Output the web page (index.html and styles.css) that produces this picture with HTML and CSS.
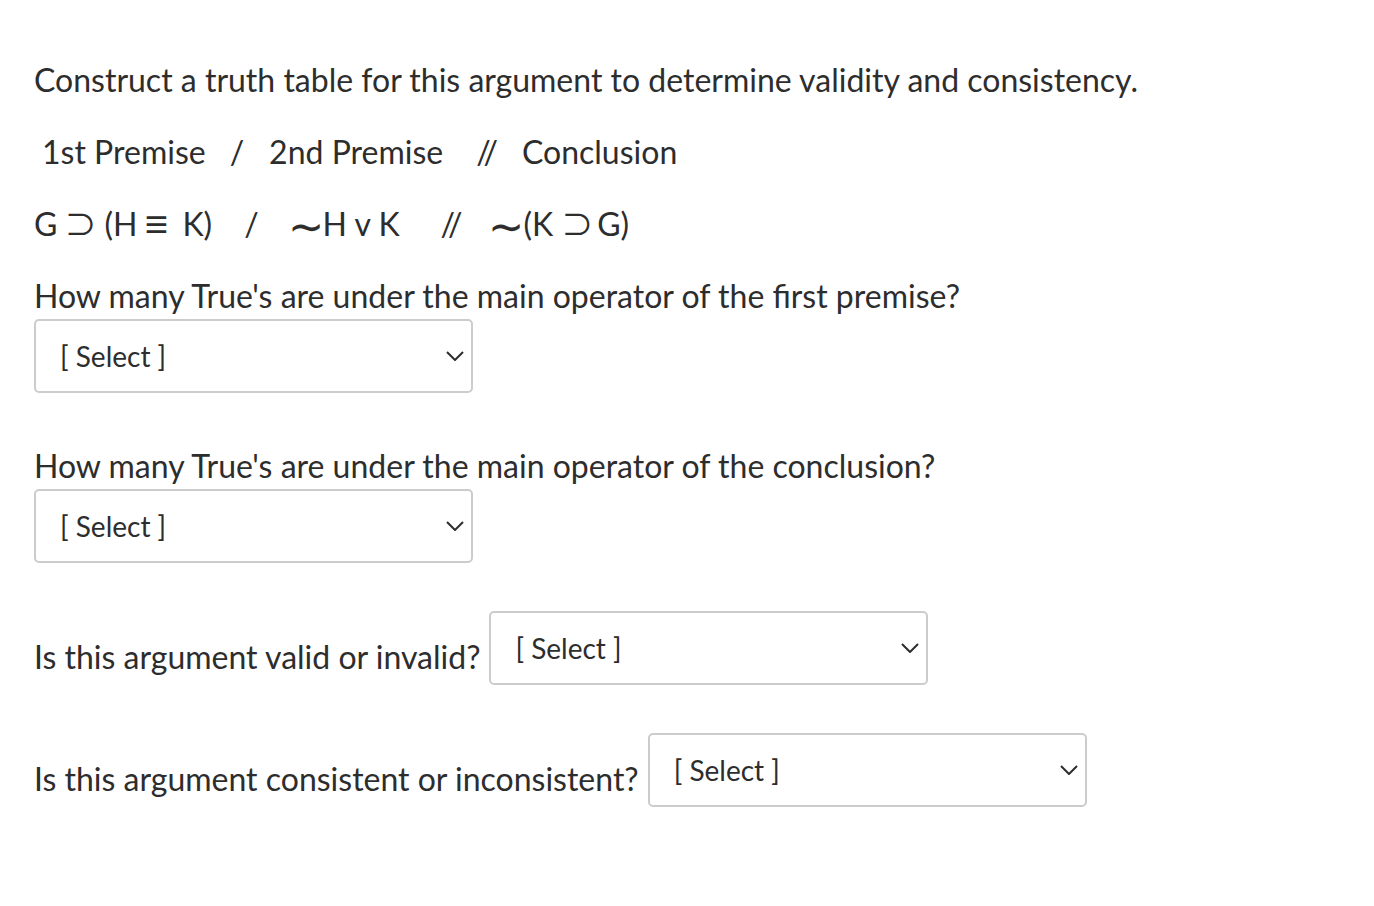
FILE: index.html
```html
<!DOCTYPE html>
<html lang="en">
<head>
<meta charset="utf-8">
<title>Truth table question</title>
<link rel="stylesheet" href="styles.css">
</head>
<body>
<main class="question">
  <p class="line">Construct a truth table for this argument to determine validity and consistency.</p>
  <p class="line premises">
    <span class="p1">1st Premise</span>
    <span class="sep1">/</span>
    <span class="p2">2nd Premise</span>
    <span class="sep2">//</span>
    <span class="p3">Conclusion</span>
  </p>
  <p class="line formula">
    <span class="t t1">G</span>
    <span class="sym s1">⊃</span>
    <span class="t t2">(H</span>
    <span class="sym eq s2">≡</span>
    <span class="t t3">K)</span>
    <span class="t t4">/</span>
    <span class="t t5"><span class="tilde tl1">∼</span>H v K</span>
    <span class="t t6">//</span>
    <span class="t t7"><span class="tilde tl2">∼</span>(K</span>
    <span class="sym s5">⊃</span>
    <span class="t t8">G)</span>
  </p>

  <div class="block">
    <p class="line tight">How many True's are under the main operator of the first premise?</p>
    <div class="select"><span>[ Select ]</span><svg class="chev" width="18" height="10" viewBox="0 0 18 10"><path d="M1 1 L9 9 L17 1" fill="none" stroke="#2d2d2d" stroke-width="2"/></svg></div>
  </div>

  <div class="block">
    <p class="line tight">How many True's are under the main operator of the conclusion?</p>
    <div class="select"><span>[ Select ]</span><svg class="chev" width="18" height="10" viewBox="0 0 18 10"><path d="M1 1 L9 9 L17 1" fill="none" stroke="#2d2d2d" stroke-width="2"/></svg></div>
  </div>

  <div class="row">
    <span class="label">Is this argument valid or invalid?</span>
    <div class="select"><span>[ Select ]</span><svg class="chev" width="18" height="10" viewBox="0 0 18 10"><path d="M1 1 L9 9 L17 1" fill="none" stroke="#2d2d2d" stroke-width="2"/></svg></div>
  </div>

  <div class="row">
    <span class="label">Is this argument consistent or inconsistent?</span>
    <div class="select"><span>[ Select ]</span><svg class="chev" width="18" height="10" viewBox="0 0 18 10"><path d="M1 1 L9 9 L17 1" fill="none" stroke="#2d2d2d" stroke-width="2"/></svg></div>
  </div>
</main>
</body>
</html>
```

FILE: styles.css
```css
html, body {
  margin: 0;
  padding: 0;
  background: #ffffff;
}
body {
  font-family: Lato, "DejaVu Sans", sans-serif;
  color: #2d2d2d;
  font-size: 32px;
}
.question {
  padding: 57px 0 0 34px;
}
.line {
  margin: 0 0 27px 0;
  line-height: 45px;
  height: 45px;
  white-space: nowrap;
}
.premises, .formula {
  display: flex;
  align-items: baseline;
}
.p1 { margin-left: 8px; }
.sep1 { margin-left: 24px; }
.p2 { margin-left: 25px; }
.sep2 { margin-left: 33px; }
.p3 { margin-left: 24px; }

/* formula tokens */
.sym,
.tilde {
  font-family: "Noto Sans CJK JP", "DejaVu Sans", sans-serif;
  font-size: 32px;
  line-height: 1;
  width: 30px;
  display: inline-flex;
  justify-content: center;
}
.sym.eq {
  font-family: "DejaVu Sans", sans-serif;
  font-weight: 200;
  font-size: 40px;
  transform: translateY(2px);
}
.tilde {
  width: 20px;
  transform: scale(1.35, 1.4);
}
.tl1 { margin-right: 7px; }
.tl2 { margin-right: 7px; }

.s1 { margin-left: 8px; }
.t2 { margin-left: 9px; }
.s2 { margin-left: 4px; }
.t3 { margin-left: 11px; }
.t4 { margin-left: 32px; }
.t5 { margin-left: 37px; }
.t6 { margin-left: 41px; }
.t7 { margin-left: 34px; }
.s5 { margin-left: 9px; }
.t8 { margin-left: 5px; }

.block {
  margin-bottom: 48px;
}
.block:first-of-type {
  margin-bottom: 50px;
}
.block .tight {
  margin-bottom: 1px;
}
.select {
  box-sizing: border-box;
  width: 439px;
  height: 74px;
  border: 2px solid #cccccc;
  border-radius: 5px;
  display: flex;
  align-items: center;
  justify-content: space-between;
  padding: 0 7px 0 24px;
  font-size: 28px;
  background: #fff;
}
.chev {
  display: block;
}
.row {
  display: flex;
  align-items: center;
  margin-bottom: 48px;
}
.row .label {
  padding-top: 16px;
  margin-right: 9px;
  line-height: 45px;
}
```
